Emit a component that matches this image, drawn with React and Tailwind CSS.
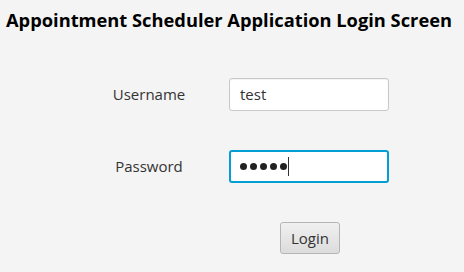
export default function App() {
  return (
    <div className="w-[464px] h-[272px] bg-[#f4f4f4] overflow-hidden flex flex-col" style={{ fontFamily: '"Open Sans", "Noto Sans", sans-serif' }}>
      <div className="pl-[6px] pt-[8px] h-[40px] text-[18.3px] font-bold text-black leading-[24px] whitespace-nowrap">
        Appointment Scheduler Application Login Screen
      </div>
      <div className="flex items-center h-[33px] mt-[38px]">
        <div className="w-[229px] pl-[69px] flex justify-center text-[15px] text-[#333]">
          <span>Username</span>
        </div>
        <div className="w-[160px] h-[33px] bg-white border border-[#c8c8c8] rounded-[3px] flex items-center pl-[10px] text-[15px] text-[#333] shadow-[inset_0_1px_1px_rgba(0,0,0,0.05)]">
          test
        </div>
      </div>
      <div className="flex items-center h-[33px] mt-[39px]">
        <div className="w-[229px] pl-[69px] flex justify-center text-[15px] text-[#333]">
          <span>Password</span>
        </div>
        <div className="w-[160px] h-[33px] bg-white border-2 border-[#039ed3] rounded-[3px] flex items-center pl-[9px]">
          <div className="flex items-center gap-[3px]">
            <span className="w-[7px] h-[7px] rounded-full bg-[#222]"></span>
            <span className="w-[7px] h-[7px] rounded-full bg-[#222]"></span>
            <span className="w-[7px] h-[7px] rounded-full bg-[#222]"></span>
            <span className="w-[7px] h-[7px] rounded-full bg-[#222]"></span>
            <span className="w-[7px] h-[7px] rounded-full bg-[#222]"></span>
          </div>
          <span className="w-[1px] h-[19px] bg-[#333] ml-[1px]"></span>
        </div>
      </div>
      <div className="flex mt-[39px]">
        <button className="ml-[280px] w-[60px] h-[32px] rounded-[3px] border border-[#b5b5b5] bg-gradient-to-b from-[#f0f0f0] to-[#dcdcdc] text-[15px] text-[#333] flex items-center justify-center">
          Login
        </button>
      </div>
    </div>
  );
}
